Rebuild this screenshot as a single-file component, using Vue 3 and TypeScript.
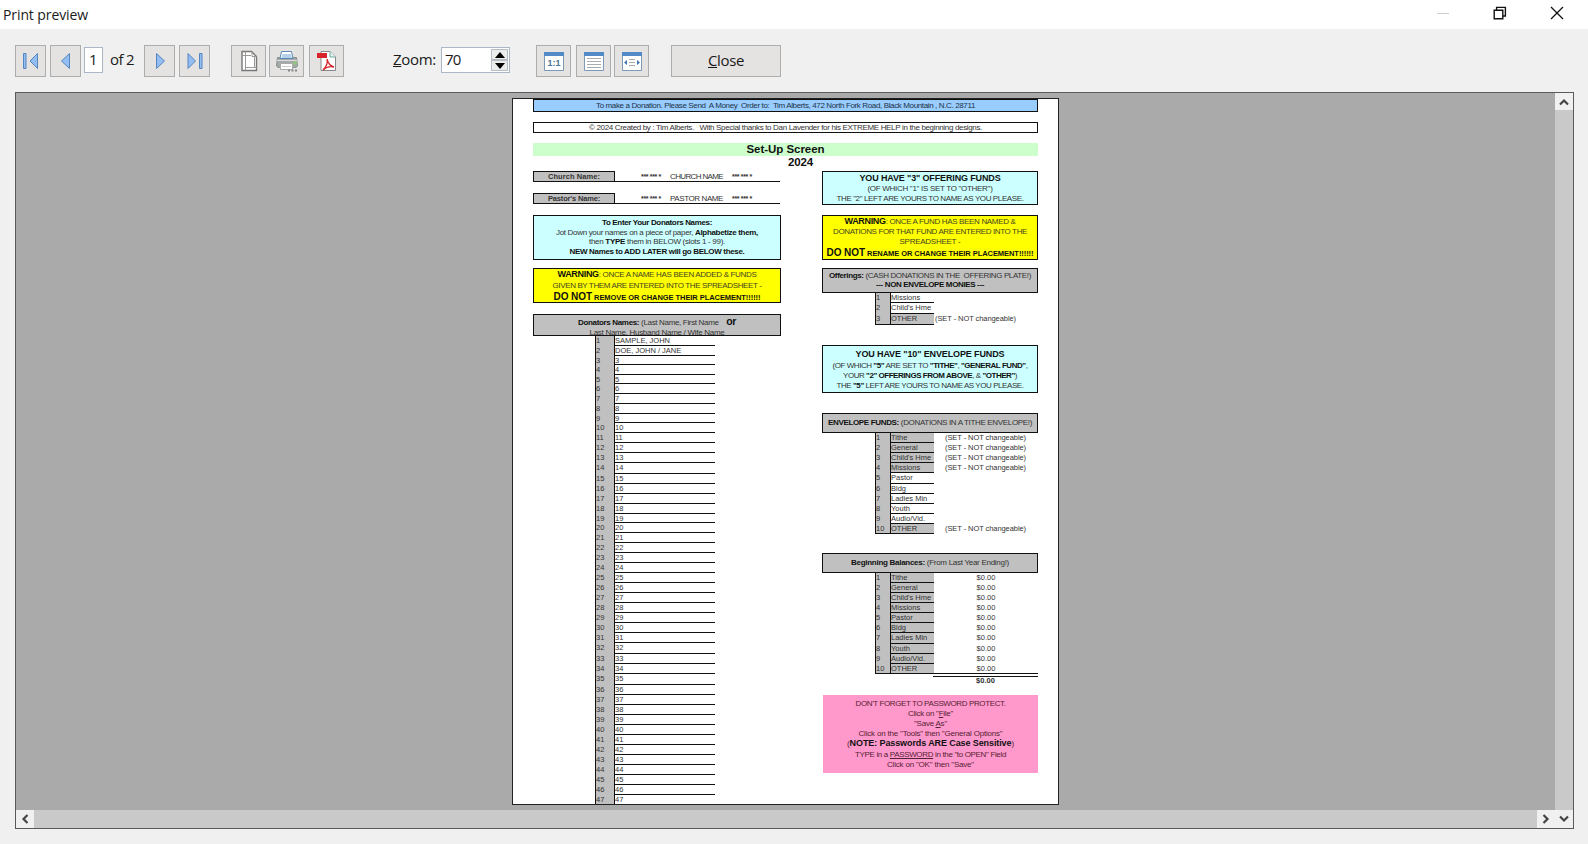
<script setup lang="ts">
interface Part {
  t: string
  b?: boolean
  u?: boolean
  s?: number
}
interface Line {
  w: number
  h: number
  parts: Part[]
}
interface Fund {
  name: string
  h: number
  set?: boolean
}

/* Spreads the letters of a line so that it takes the given width. */
const vFit = {
  mounted(el: HTMLElement, binding: { value: number }) {
    const count = Math.max((el.textContent ?? '').length, 1)
    for (let i = 0; i < 2; i++) {
      const now = parseFloat(el.style.letterSpacing || '0')
      const gap = (binding.value - el.getBoundingClientRect().width) / count
      el.style.letterSpacing = `${now + gap}px`
    }
  },
}

const r = (t: string): Part => ({ t })
const b = (t: string, s?: number): Part => ({ t, b: true, s })
const u = (t: string): Part => ({ t, u: true })
const line = (w: number, h: number, ...parts: Part[]): Line => ({ w, h, parts })

const donation =
  'To make a Donation. Please Send  A Money  Order to:  Tim Alberts, 472 North Fork Road, Black Mountain , N.C. 28711'
const credit =
  '© 2024 Created by : Tim Alberts.   With Special thanks to Dan Lavender for his EXTREME HELP in the beginning designs.'

const enterNames: Line[] = [
  line(110, 11, b('To Enter Your Donators Names:')),
  line(202, 9, r('Jot Down your names on a piece of paper, '), b('Alphabetize them,')),
  line(136, 9, r('then '), b('TYPE'), r(' them in BELOW (slots 1 - 99).')),
  line(175, 10, b('NEW Names to ADD LATER will go BELOW these.')),
]
const warnNames: Line[] = [
  line(199, 10, b('WARNING', 9), r(': ONCE A NAME HAS BEEN ADDED & FUNDS')),
  line(209, 12, r('GIVEN BY THEM ARE ENTERED INTO THE SPREADSHEET -')),
  line(207, 11, b('DO NOT', 10), b(' REMOVE OR CHANGE THEIR PLACEMENT!!!!!!', 7.5)),
]
const donorHead: Line[] = [
  line(158, 13, b('Donators Names: '), r('(Last Name, First Name    '), b('or', 10.5)),
  line(135, 9, r('Last Name, Husband Name / Wife Name')),
]
const offerInfo: Line[] = [
  line(141, 9, b('YOU HAVE "3" OFFERING FUNDS', 9)),
  line(125, 10, r('(OF WHICH "1" IS SET TO "OTHER")')),
  line(187, 10, r('THE "2" LEFT ARE YOURS TO NAME AS YOU PLEASE.')),
]
const warnFunds: Line[] = [
  line(171, 9, b('WARNING', 9), r(': ONCE A FUND HAS BEEN NAMED &')),
  line(194, 10, r('DONATIONS FOR THAT FUND ARE ENTERED INTO THE')),
  line(61, 10, r('SPREADSHEET -')),
  line(207, 13, b('DO NOT', 10), b(' RENAME OR CHANGE THEIR PLACEMENT!!!!!!', 7.5)),
]
const offerHead: Line[] = [
  line(202, 10, b('Offerings:'), r(' (CASH DONATIONS IN THE  OFFERING PLATE!)')),
  line(108, 9, b('--- NON ENVELOPE MONIES ---')),
]
const envelopeInfo: Line[] = [
  line(149, 11, b('YOU HAVE "10" ENVELOPE FUNDS', 9)),
  line(195, 10, r('(OF WHICH '), b('"5"'), r(' ARE SET TO '), b('"TITHE"'), r(', '), b('"GENERAL FUND"'), r(',')),
  line(174, 10, r('YOUR '), b('"2" OFFERINGS FROM ABOVE'), r(', & '), b('"OTHER"'), r(')')),
  line(187, 10, r('THE '), b('"5"'), r(' LEFT ARE YOURS TO NAME AS YOU PLEASE.')),
]
const envelopeHead: Line[] = [
  line(204, 17, b('ENVELOPE FUNDS:'), r(' (DONATIONS IN A TITHE ENVELOPE!)')),
]
const balanceHead: Line[] = [
  line(158, 17, b('Beginning Balances:'), r(' (From Last Year Ending!)')),
]
const reminder: Line[] = [
  line(150, 10, r("DON'T FORGET TO PASSWORD PROTECT.")),
  line(45, 10, r('Click on "'), u('F'), r('ile"')),
  line(33, 10, r('"Save '), u('A'), r('s"')),
  line(144, 10, r('Click on the "Tools" then "General Options"')),
  line(167, 11, r('('), b('NOTE: Passwords ARE Case Sensitive', 9), r(')')),
  line(151, 10, r('TYPE in a '), u('PASSWORD'), r(' in the "to OPEN" Field')),
  line(87, 10, r('Click on "OK" then "Save"')),
]

const tall: Record<number, number> = { 3: 9, 5: 9, 9: 9, 14: 11, 19: 9, 32: 11, 35: 11 }
const donors = Array.from({ length: 47 }, (_, i) => ({
  no: i + 1,
  name: i === 0 ? 'SAMPLE, JOHN' : i === 1 ? 'DOE, JOHN / JANE' : String(i + 1),
  h: tall[i + 1] ?? 10,
}))

const offerings: Fund[] = [
  { name: 'Missions', h: 10 },
  { name: "Child's Hme", h: 11 },
  { name: 'OTHER', h: 11, set: true },
]
const names = ['Tithe', 'General', "Child's Hme", 'Missions', 'Pastor', 'Bldg', 'Ladies Min', 'Youth', 'Audio/Vid.', 'OTHER']
const envelopes: Fund[] = names.map((name, i) => ({
  name,
  h: i === 4 ? 11 : 10,
  set: i < 4 || i === 9,
}))
const balances: Fund[] = names.map((name, i) => ({ name, h: i === 6 ? 11 : 10, set: true }))

const leftBoxes = [
  { kind: 'cyan tall', lines: enterNames },
  { kind: 'yellow', lines: warnNames },
  { kind: 'gray donor-head', lines: donorHead },
]
</script>

<template>
  <div class="window">
    <header class="titlebar">
      <span v-fit="85" class="title">Print preview</span>
      <div class="controls">
        <svg width="14" height="14" viewBox="0 0 14 14"><path d="M1 7.5h12" stroke="#ccc" /></svg>
        <svg width="14" height="14" viewBox="0 0 14 14" fill="none" stroke="#111" stroke-width="1.4">
          <path d="M1.2 4.2h8.6v8.6H1.2zM3.6 4V1.4h8.8v8.6H10" />
        </svg>
        <svg width="14" height="14" viewBox="0 0 14 14"><path d="M1 1l12 12M13 1L1 13" stroke="#111" stroke-width="1.3" /></svg>
      </div>
    </header>

    <div class="toolbar">
      <button class="btn nav">
        <svg width="18" height="18" viewBox="0 0 18 18" fill="#94bdf2" stroke="#5585bf"><path d="M1.500 1.500h2.500v15h-2.500zM15.500 1.500v15L8 9z" /></svg>
      </button>
      <button class="btn nav g4">
        <svg width="18" height="18" viewBox="0 0 18 18" fill="#94bdf2" stroke="#5585bf"><path d="M12.500 1.500v15L4.500 9z" /></svg>
      </button>
      <div class="page-no">1</div>
      <span v-fit="24" class="label of">of 2</span>
      <button class="btn nav g10">
        <svg width="18" height="18" viewBox="0 0 18 18" fill="#94bdf2" stroke="#5585bf"><path d="M5.500 1.500v15L13.500 9z" /></svg>
      </button>
      <button class="btn nav g4">
        <svg width="18" height="18" viewBox="0 0 18 18" fill="#94bdf2" stroke="#5585bf"><path d="M13.500 1.500h2.500v15h-2.500zM2 1.500v15L9.500 9z" /></svg>
      </button>

      <button class="btn g21">
        <svg width="18" height="22" viewBox="0 0 18 22" fill="none" stroke="#777">
          <path d="M2 1.500h9.500l5 5v14H2z" fill="#fff" stroke-width="1.400" />
          <path d="M5.500 1.500v19M2 5.500h9M12 1.500v5h4.500M14.500 7v10.500M5.500 17.500h11" stroke="#999" />
        </svg>
      </button>
      <button class="btn g3">
        <svg width="24" height="22" viewBox="0 0 24 22">
          <path d="M2.500 7.500h19l1 8.500q-1 1.500-3 1.500h-15q-2 0-3-1.500z" fill="#a4a9a9" stroke="#858b8b" />
          <path d="M6.500 1.500h10l1.500 7H5z" fill="#fff" stroke="#5d88b5" />
          <path d="M7.500 4h8.500l.8 4H6.600z" fill="#b5d0ea" />
          <path d="M2 10.500h20" stroke="#ddd" /><path d="M18 11.500h4v3h-4z" fill="#93c47d" />
          <path d="M5.500 13.500h12v6h-12z" fill="#fff" stroke="#aaa" />
          <path d="M7 16.500h9" stroke="#ccc" /><path d="M13 20.500h10" stroke="#888" stroke-width="2" stroke-dasharray="2 1.500" />
        </svg>
      </button>
      <button class="btn g5">
        <svg width="21" height="22" viewBox="0 0 21 22">
          <path d="M5 1.500h9l5.500 5.500v13.500H5z" fill="#fff" stroke="#888" />
          <path d="M14 1.500V7h5.500" fill="#e5f4ef" stroke="#6ca99a" />
          <path d="M1 3h10v5H1z" fill="#d8232a" />
          <path d="M11 9c1 4 3 7 7 8-4-1-8 0-11 3 3-3 5-7 4-11z" fill="none" stroke="#d8232a" stroke-width="1.300" />
        </svg>
      </button>

      <span v-fit="43" class="label zoom"><u>Z</u>oom:</span>
      <div class="spinner">
        <span>70</span>
        <div class="steps">
          <i><svg width="10" height="6" viewBox="0 0 10 6"><path d="M0 6h10L5 0z" /></svg></i>
          <i><svg width="10" height="6" viewBox="0 0 10 6"><path d="M0 0h10L5 6z" /></svg></i>
        </div>
      </div>

      <button class="btn g26">
        <svg width="20" height="19" viewBox="0 0 20 19">
          <path d="M.5.5h19v18H.5z" fill="#fff" stroke="#7c99b8" /><path d="M0 0h20v4H0z" fill="#5289c7" />
          <text x="10" y="14" text-anchor="middle" class="one">1:1</text>
        </svg>
      </button>
      <button class="btn g5">
        <svg width="20" height="19" viewBox="0 0 20 19">
          <path d="M.5.5h19v18H.5z" fill="#fff" stroke="#7c99b8" /><path d="M0 0h20v4H0z" fill="#5289c7" />
          <path d="M3 6.500h14M3 9.500h14M3 12.500h14M3 15.500h14" stroke="#aaa" />
        </svg>
      </button>
      <button class="btn g3">
        <svg width="20" height="19" viewBox="0 0 20 19">
          <path d="M.5.5h19v18H.5z" fill="#fff" stroke="#7c99b8" /><path d="M0 0h20v4H0z" fill="#5289c7" />
          <path d="M7 7.500h6M7 10.500h6M7 13.500h6" stroke="#aaa" /><path d="M5 8v5L2 10.500zM15 8v5l3-2.500z" fill="#4277ad" />
        </svg>
      </button>
      <button class="btn close"><span v-fit="36" class="label"><u>C</u>lose</span></button>
    </div>

    <div class="viewport">
      <div class="canvas">
        <div class="page">
          <div class="bar blue"><span v-fit="379">{{ donation }}</span></div>
          <div class="bar credit"><span v-fit="393">{{ credit }}</span></div>
          <div class="bar green"><span v-fit="78">Set-Up Screen</span></div>
          <div class="year"><span v-fit="25">2024</span></div>

          <div class="columns">
            <div class="left">
              <div v-for="k in ['Church', 'Pastor']" :key="k" class="field">
                <div class="key"><span v-fit="52">{{ k === 'Church' ? 'Church Name:' : "Pastor's Name:" }}</span></div>
                <div class="val">
                  <span v-fit="20" class="stars">*** *** *</span>
                  <span v-fit="53">{{ k.toUpperCase() }} NAME</span>
                  <span v-fit="20" class="stars">*** *** *</span>
                </div>
              </div>
              <div v-for="(box, i) in leftBoxes" :key="i" class="box" :class="box.kind">
                <div v-for="(l, j) in box.lines" :key="j" class="line" :style="{ height: l.h + 'px' }">
                  <span v-fit="l.w"><span v-for="(p, q) in l.parts" :key="q" :class="{ b: p.b, u: p.u }" :style="p.s ? { fontSize: p.s + 'px' } : undefined">{{ p.t }}</span></span>
                </div>
              </div>
              <div class="donors">
                <div v-for="d in donors" :key="d.no" class="donor" :style="{ height: d.h + 'px' }">
                  <span class="no">{{ d.no }}</span>
                  <span class="name">{{ d.name }}</span>
                </div>
              </div>
            </div>

            <div class="right">
              <div class="box cyan offer">
                <div v-for="(l, j) in offerInfo" :key="j" class="line" :style="{ height: l.h + 'px' }">
                  <span v-fit="l.w"><span v-for="(p, q) in l.parts" :key="q" :class="{ b: p.b, u: p.u }" :style="p.s ? { fontSize: p.s + 'px' } : undefined">{{ p.t }}</span></span>
                </div>
              </div>
              <div class="box yellow funds-warn">
                <div v-for="(l, j) in warnFunds" :key="j" class="line" :style="{ height: l.h + 'px' }">
                  <span v-fit="l.w"><span v-for="(p, q) in l.parts" :key="q" :class="{ b: p.b, u: p.u }" :style="p.s ? { fontSize: p.s + 'px' } : undefined">{{ p.t }}</span></span>
                </div>
              </div>
              <div class="box gray offer-head">
                <div v-for="(l, j) in offerHead" :key="j" class="line" :style="{ height: l.h + 'px' }">
                  <span v-fit="l.w"><span v-for="(p, q) in l.parts" :key="q" :class="{ b: p.b, u: p.u }">{{ p.t }}</span></span>
                </div>
              </div>
              <div class="funds">
                <div v-for="(f, i) in offerings" :key="i" class="fund" :style="{ height: f.h + 'px' }">
                  <span class="no">{{ i + 1 }}</span>
                  <span class="name" :class="{ set: f.set }">{{ f.name }}</span>
                  <span v-if="f.set" v-fit="81" class="note near">(SET - NOT changeable)</span>
                </div>
              </div>
              <div class="box cyan env-info">
                <div v-for="(l, j) in envelopeInfo" :key="j" class="line" :style="{ height: l.h + 'px' }">
                  <span v-fit="l.w"><span v-for="(p, q) in l.parts" :key="q" :class="{ b: p.b, u: p.u }" :style="p.s ? { fontSize: p.s + 'px' } : undefined">{{ p.t }}</span></span>
                </div>
              </div>
              <div class="box gray env-head">
                <div v-for="(l, j) in envelopeHead" :key="j" class="line" :style="{ height: l.h + 'px' }">
                  <span v-fit="l.w"><span v-for="(p, q) in l.parts" :key="q" :class="{ b: p.b }">{{ p.t }}</span></span>
                </div>
              </div>
              <div class="funds">
                <div v-for="(f, i) in envelopes" :key="i" class="fund" :style="{ height: f.h + 'px' }">
                  <span class="no">{{ i + 1 }}</span>
                  <span class="name" :class="{ set: f.set }">{{ f.name }}</span>
                  <span v-if="f.set" v-fit="81" class="note">(SET - NOT changeable)</span>
                </div>
              </div>
              <div class="box gray bal-head">
                <div v-for="(l, j) in balanceHead" :key="j" class="line" :style="{ height: l.h + 'px' }">
                  <span v-fit="l.w"><span v-for="(p, q) in l.parts" :key="q" :class="{ b: p.b }">{{ p.t }}</span></span>
                </div>
              </div>
              <div class="funds">
                <div v-for="(f, i) in balances" :key="i" class="fund" :style="{ height: f.h + 'px' }">
                  <span class="no">{{ i + 1 }}</span>
                  <span class="name set">{{ f.name }}</span>
                  <span class="amount">$0.00</span>
                </div>
              </div>
              <div class="total">$0.00</div>
              <div class="box pink">
                <div v-for="(l, j) in reminder" :key="j" class="line" :style="{ height: l.h + 'px' }">
                  <span v-fit="l.w"><span v-for="(p, q) in l.parts" :key="q" :class="{ b: p.b, u: p.u }" :style="p.s ? { fontSize: p.s + 'px' } : undefined">{{ p.t }}</span></span>
                </div>
              </div>
            </div>
          </div>
        </div>
      </div>
      <div class="vbar">
        <i><svg width="10" height="8" viewBox="0 0 10 8"><path d="M1 6.500l4-4 4 4" /></svg></i>
      </div>
      <div class="hbar">
        <i><svg width="8" height="10" viewBox="0 0 8 10"><path d="M6.500 1l-4 4 4 4" /></svg></i>
        <i><svg width="8" height="10" viewBox="0 0 8 10"><path d="M1.500 1l4 4-4 4" /></svg></i>
      </div>
      <div class="corner">
        <i><svg width="10" height="8" viewBox="0 0 10 8"><path d="M1 1.500l4 4 4-4" /></svg></i>
      </div>
    </div>
  </div>
</template>

<style>
body {
  margin: 0;
  overflow: hidden;
}
</style>

<style scoped>
* {
  box-sizing: border-box;
}
.window {
  width: 1588px;
  height: 844px;
  background: #f0f0f0;
  display: flex;
  flex-direction: column;
  font-family: 'Open Sans', 'Noto Sans', sans-serif;
  color: #1a1a1a;
}
.titlebar {
  height: 29px;
  flex: none;
  background: #fff;
  display: flex;
  justify-content: space-between;
  padding: 0 24px 0 3px;
}
.title {
  align-self: flex-start;
  font-size: 14px;
  line-height: 29px;
  white-space: nowrap;
}
.controls {
  display: flex;
  gap: 43px;
  padding-top: 6px;
}
.toolbar {
  height: 63px;
  flex: none;
  display: flex;
  align-items: flex-start;
  padding: 16px 0 0 15px;
}
.btn {
  width: 35px;
  height: 32px;
  flex: none;
  padding: 0;
  border: 1px solid #adadad;
  background: #e4e3e2;
  display: flex;
  align-items: center;
  justify-content: center;
  font-family: inherit;
  color: inherit;
}
.nav { width: 31px; }
.g3 { margin-left: 3px; }
.g4 { margin-left: 4px; }
.g5 { margin-left: 5px; }
.g10 { margin-left: 10px; }
.g21 { margin-left: 21px; }
.g26 { margin-left: 26px; }
.one {
  font: bold 9px 'Liberation Sans', Arial, sans-serif;
  fill: #4a7396;
}
.page-no {
  width: 19px;
  height: 26px;
  margin: 2px 0 0 3px;
  border: 1px solid #a9b7c6;
  background: #fff;
  font-size: 15px;
  line-height: 23px;
  padding-left: 4px;
}
.label {
  font-size: 15px;
  line-height: 29px;
  white-space: nowrap;
}
.close .label { margin-top: -2px; }
.of { margin-left: 7px; }
.zoom { margin-left: 49px; }
.spinner {
  width: 69px;
  height: 26px;
  margin: 2px 0 0 5px;
  border: 1px solid #a9b7c6;
  background: #fff;
  display: flex;
  justify-content: space-between;
  font-size: 15px;
  line-height: 23px;
  padding: 0 1px 0 3px;
}
.spinner > span { letter-spacing: -0.9px; }
.steps {
  width: 17px;
  display: flex;
  flex-direction: column;
  padding: 1px 0;
}
.steps i {
  flex: 1;
  border: 1px solid #b5bcc4;
  background: #ececec;
  display: flex;
  align-items: center;
  justify-content: center;
}
.close {
  width: 110px;
  margin-left: 22px;
}
.viewport {
  width: 1559px;
  height: 737px;
  margin-left: 15px;
  border: 1px solid #5a5a5a;
  display: grid;
  grid-template-columns: 1fr 18px;
  grid-template-rows: 1fr 18px;
}
.canvas {
  background: #aaa;
  padding: 5px 0 0 496px;
}
.vbar, .hbar { background: #c9c9c9; }
.hbar {
  display: flex;
  justify-content: space-between;
}
.vbar i, .hbar i, .corner i {
  width: 18px;
  height: 17px;
  background: #f0f0f0;
  display: flex;
  align-items: center;
  justify-content: center;
}
.hbar i, .corner i { height: 18px; }
.vbar path, .hbar path, .corner path {
  fill: none;
  stroke: #444;
  stroke-width: 2.2;
}

.page {
  width: 547px;
  height: 707px;
  border: 1px solid #222;
  background: #fff;
  padding: 0 20px;
  font-family: 'Liberation Sans', Arial, sans-serif;
  font-size: 8px;
  color: #333;
  overflow: hidden;
}
.bar {
  width: 505px;
  display: flex;
  align-items: center;
  justify-content: center;
  white-space: pre;
  line-height: 9px;
  border: 1px solid #111;
}
.blue {
  height: 13px;
  background: #9cf;
  color: #234;
}
.credit {
  height: 11px;
  margin-top: 10px;
}
.green {
  height: 13px;
  margin-top: 10px;
  border: 0;
  background: #cfc;
  font-size: 11.5px;
  font-weight: bold;
  color: #111;
}
.year {
  height: 15px;
  display: flex;
  justify-content: center;
  padding-left: 30px;
  font-size: 11.5px;
  line-height: 13px;
  font-weight: bold;
  color: #111;
}
.columns {
  width: 505px;
  display: flex;
  justify-content: space-between;
}
.left { width: 248px; }
.right { width: 216px; }
.field {
  display: flex;
  height: 11px;
  margin-bottom: 11px;
}
.key {
  width: 82px;
  border: 1px solid #111;
  background: #c0c0c0;
  display: flex;
  align-items: center;
  justify-content: center;
  font-weight: bold;
  font-size: 7.5px;
  line-height: 9px;
  white-space: nowrap;
}
.val {
  width: 165px;
  border-bottom: 1px solid #111;
  display: flex;
  align-items: center;
  padding-left: 26px;
  gap: 9px;
  line-height: 9px;
  white-space: nowrap;
}
.stars {
  font-weight: bold;
  font-size: 7px;
}
.box {
  border: 1px solid #111;
  overflow: hidden;
}
.line {
  display: flex;
  align-items: center;
  justify-content: center;
  white-space: pre;
  line-height: 9px;
}
.b {
  font-weight: bold;
  color: #111;
}
.u { text-decoration: underline; }
.cyan { background: #cff; }
.yellow { background: #ff0; color: #442; }
.gray { background: #c0c0c0; }
.tall {
  height: 45px;
  padding-top: 1px;
}
.left .yellow {
  height: 35px;
  margin-top: 8px;
}
.donor-head {
  height: 22px;
  margin-top: 11px;
}
.donors {
  width: 120px;
  margin-left: 62px;
  border-left: 1px solid #111;
}
.donor, .fund {
  display: flex;
  line-height: 9px;
  font-size: 7.5px;
  white-space: nowrap;
}
.no {
  width: 18px;
  background: #c0c0c0;
  flex: none;
}
.name {
  border-left: 1px solid #111;
  border-bottom: 1px solid #111;
  flex: none;
}
.donor .name { width: 101px; }
.donor:last-child .no { border-bottom: 1px solid #111; }
.funds {
  margin-left: 53px;
  border-left: 1px solid #111;
}
.fund .no { width: 14px; }
.fund:last-child .no { border-bottom: 1px solid #111; }
.fund .name { width: 44px; }
.set { background: #c0c0c0; }
.note {
  margin-left: 11px;
  align-self: flex-start;
}
.near { margin-left: 1px; }
.amount {
  flex: 1;
  text-align: center;
}
.fund:last-child .amount { border-bottom: 1px solid #111; }
.offer { height: 34px; padding-top: 2px; }
.funds-warn { height: 45px; margin-top: 10px; padding-top: 1px; }
.offer-head { height: 25px; margin-top: 8px; padding-top: 1px; }
.env-info { height: 48px; margin-top: 20px; padding-top: 3px; }
.env-head { height: 20px; margin-top: 20px; }
.bal-head { height: 20px; margin-top: 19px; }
.total {
  margin-left: 111px;
  height: 13px;
  border-top: 1px solid #111;
  margin-top: 2px;
  text-align: center;
  font-weight: bold;
  font-size: 7.5px;
  line-height: 8px;
}
.pink {
  height: 78px;
  margin: 6px 0 0 1px;
  padding-top: 3px;
  border: 0;
  background: #f9c;
  color: #523;
}
</style>
